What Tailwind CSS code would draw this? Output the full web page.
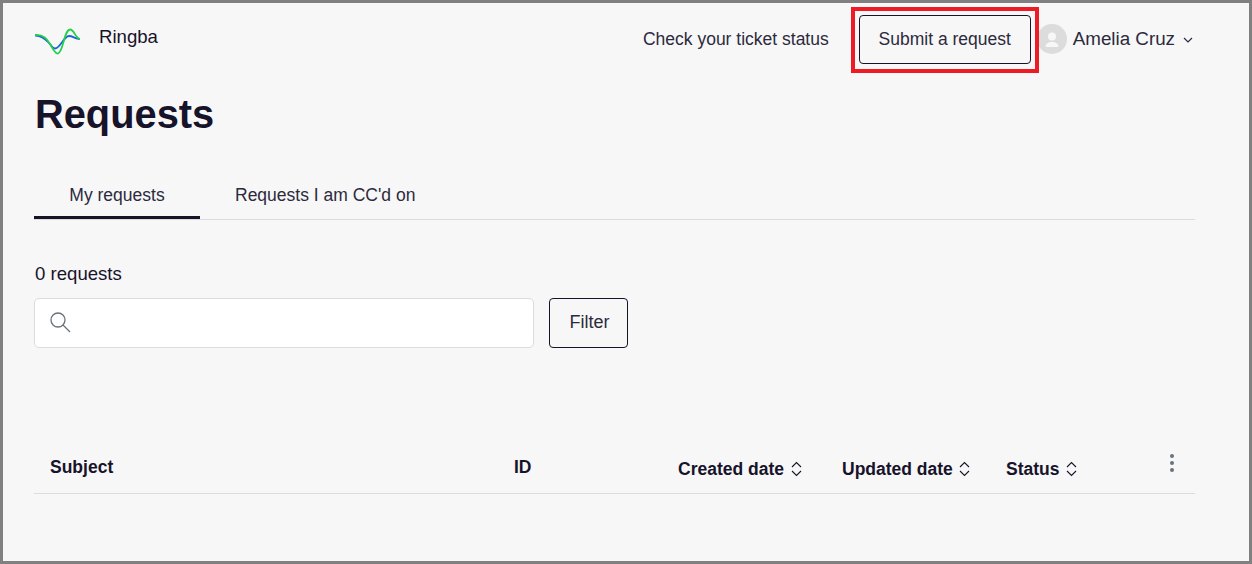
<!DOCTYPE html>
<html lang="en">
<head>
    <meta charset="UTF-8">
    <title>Requests</title>
    <script src="https://cdn.jsdelivr.net/npm/@tailwindcss/browser@4"></script>
</head>
<body class="bg-[#808080]">
    <div class="h-[564px] w-[1252px] overflow-hidden border-[3px] border-[#808080] bg-[#f7f7f7] pl-[31px] pr-[54px] font-['Liberation_Sans',sans-serif] text-[#17132b]">

        <!-- header -->
        <header class="flex h-[70px] items-start">
            <div class="flex items-start">
                <svg width="47" height="30" viewBox="0 0 47 30" fill="none" class="mt-[23px]">
                    <path d="M1 9.500C9 9 13 15 16 18C18 20.500 19 22.500 21 22.500C26 22.500 30 10 35 10C39 10 41 13 46 13" stroke="#1d62d8" stroke-width="1.800"/>
                    <path d="M1 9C10 8.500 13 13 16 18C19 23 21 28 24 27.500C29 27 30 4 36 3.500C40 3 41 12 46 13" stroke="#22d04a" stroke-width="1.800"/>
                </svg>
                <span class="ml-[18px] mt-[22px] text-[18.6px] leading-[24px]">Ringba</span>
            </div>
            <div class="ml-auto flex items-start pr-[2px]">
                <a class="mt-[24px] text-[17.5px] leading-[24px] text-[#2c2a3d]">Check your ticket status</a>
                <div class="relative z-10 ml-[22px] mt-[4px] border-[4px] border-[#ed1c24] px-[4px] pb-[5px] pt-[4px]">
                    <button class="flex h-[49px] w-[172px] items-center justify-center rounded-[4px] border border-[#17132b] text-[17.5px] text-[#2c2a3d]">Submit a request</button>
                </div>
                <div class="-ml-[2px] mt-[21px] flex items-center">
                    <span class="flex h-[30px] w-[30px] items-center justify-center rounded-full bg-[#dcdcdc]">
                        <svg width="16" height="17" viewBox="0 0 16 17" fill="#f7f7f7">
                            <circle cx="8" cy="5.500" r="4"/>
                            <path d="M1.500 16C1.500 13 4 11 8 11C12 11 14.500 13 14.500 16Z"/>
                        </svg>
                    </span>
                    <span class="ml-[6px] text-[18.8px] leading-[24px] text-[#2c2a3d]">Amelia Cruz</span>
                    <svg width="10" height="6" viewBox="0 0 10 6" fill="none" stroke="#2c2a3d" stroke-width="1.200" class="ml-[8px] mt-[1px]">
                        <path d="M1 1L5 5L9 1"/>
                    </svg>
                </div>
            </div>
        </header>

        <h1 class="mt-[18px] pl-[1px] text-[39.8px] font-bold leading-[46px]">Requests</h1>

        <!-- tabs -->
        <nav class="mt-[36px] flex border-b border-[#dcdcdc] text-[17.5px] text-[#2c2a3d]">
            <a class="flex h-[46px] w-[166px] items-center justify-center border-b-[3px] border-[#17132b] pt-[2px]">My requests</a>
            <a class="flex h-[46px] items-center pb-[1px] pl-[35px]">Requests I am CC'd on</a>
        </nav>

        <p class="mt-[42px] pl-[1px] text-[18.6px] leading-[24px]">0 requests</p>

        <!-- search and filter -->
        <div class="mt-[12px] flex gap-[15px]">
            <div class="flex h-[50px] w-[500px] items-center rounded-[5px] border border-[#dcdcdc] bg-white pl-[14px]">
                <svg width="22" height="22" viewBox="0 0 22 22" fill="none" stroke="#68737d" stroke-width="1.300" class="-mt-[3px]">
                    <circle cx="9" cy="9" r="7"/>
                    <path d="M14 14L21 21"/>
                </svg>
            </div>
            <button class="h-[50px] w-[79px] rounded-[4px] border border-[#17132b] pb-[1px] pl-[2px] text-[18px] text-[#2c2a3d]">Filter</button>
        </div>

        <!-- table head -->
        <div class="mt-[96px] flex h-[50px] items-start border-b border-[#dcdcdc] text-[17.5px] font-bold">
            <div class="w-[480px] pl-[16px] pt-[11px] leading-[24px]">Subject</div>
            <div class="w-[164px] pt-[11px] leading-[24px]">ID</div>
            <div class="flex w-[164px] items-center gap-[6px] pt-[13px] leading-[24px]">Created date
                <svg width="13" height="16" viewBox="0 0 13 16" fill="none" stroke="#17132b" stroke-width="1.100"><path d="M2 6L6.500 1.500L11 6M2 10L6.500 14.500L11 10"/></svg>
            </div>
            <div class="flex w-[164px] items-center gap-[5px] pt-[13px] leading-[24px]">Updated date
                <svg width="13" height="16" viewBox="0 0 13 16" fill="none" stroke="#17132b" stroke-width="1.100"><path d="M2 6L6.500 1.500L11 6M2 10L6.500 14.500L11 10"/></svg>
            </div>
            <div class="flex w-[164px] items-center gap-[6px] pt-[13px] leading-[24px]">Status
                <svg width="13" height="16" viewBox="0 0 13 16" fill="none" stroke="#17132b" stroke-width="1.100"><path d="M2 6L6.500 1.500L11 6M2 10L6.500 14.500L11 10"/></svg>
            </div>
            <div class="mt-[10px] flex flex-col gap-[3px]">
                <span class="h-[4px] w-[4px] rounded-full bg-[#68737d]"></span>
                <span class="h-[4px] w-[4px] rounded-full bg-[#68737d]"></span>
                <span class="h-[4px] w-[4px] rounded-full bg-[#68737d]"></span>
            </div>
        </div>
    </div>
</body>
</html>
